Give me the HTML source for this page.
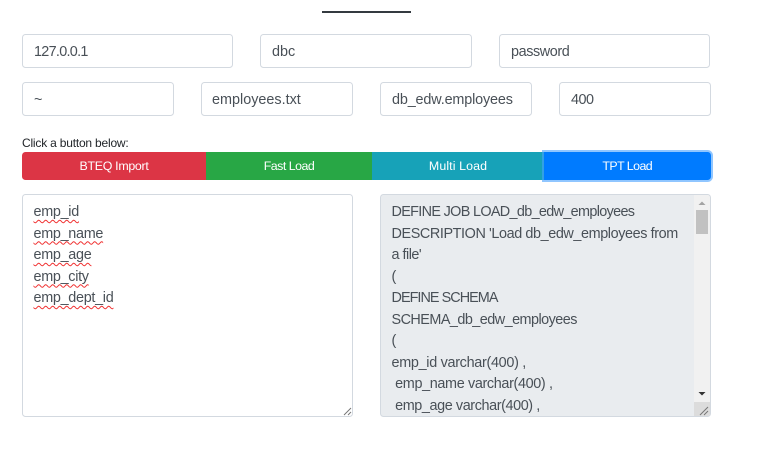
<!DOCTYPE html>
<html><head><meta charset="utf-8"><style>
html,body{margin:0;padding:0;background:#fff;width:768px;height:455px;overflow:hidden}
body{font-family:"Liberation Sans",sans-serif;color:#495057;position:relative}
.a{position:absolute;box-sizing:border-box}
.i{height:34px;border:1px solid #d3d9e0;border-radius:3.5px;background:#fff;font-size:14.4px;line-height:34px;padding-left:11px;white-space:nowrap}
.b{top:152px;height:28px;color:#fff;font-size:12.4px;line-height:29px;text-align:center;white-space:nowrap}
.t{top:194px;height:223px;border:1px solid #d3d9e0;border-radius:3.5px;overflow:hidden}
.l{position:absolute;left:10.5px;font-size:14.4px;line-height:21.5px;white-space:pre;color:#495057}
.w{text-decoration:underline wavy #f03030 1px;text-underline-offset:3px;text-decoration-skip-ink:none}
</style></head><body>
<div class="a" style="left:322px;top:11px;width:89px;height:2px;background:#343a40"></div>
<div class="a i" style="left:22px;top:34px;width:211px;letter-spacing:-.7px">127.0.0.1</div>
<div class="a i" style="left:260px;top:34px;width:212px">dbc</div>
<div class="a i" style="left:499px;top:34px;width:211px;letter-spacing:-.4px">password</div>
<div class="a i" style="left:22px;top:82px;width:152px">~</div>
<div class="a i" style="left:201px;top:82px;width:152px;padding-left:10px">employees.txt</div>
<div class="a i" style="left:380px;top:82px;width:152px;letter-spacing:-.15px">db_edw.employees</div>
<div class="a i" style="left:559px;top:82px;width:152px;letter-spacing:-.5px">400</div>
<div class="a" style="left:22px;top:135px;font-size:12px;line-height:16px;color:#212529;white-space:nowrap;letter-spacing:-.2px">Click a button below:</div>
<div class="a b" style="left:22px;width:184px;background:#dc3545;border-radius:3.5px 0 0 3.5px;letter-spacing:-.3px">BTEQ Import</div>
<div class="a b" style="left:206px;width:166px;background:#28a745;letter-spacing:-.5px">Fast Load</div>
<div class="a b" style="left:372px;width:172px;background:#17a2b8;letter-spacing:.1px">Multi Load</div>
<div class="a b" style="left:543.5px;width:167.5px;background:#007bff;border-radius:0 3.5px 3.5px 0;box-shadow:0 0 0 2px rgba(70,160,255,.6);letter-spacing:-.55px">TPT Load</div>
<div class="a t" style="left:22px;width:331px;background:#fff">
<div class="l" style="top:7px;letter-spacing:-.3px"><span class="w">emp_id</span>
<span class="w">emp_name</span>
<span class="w">emp_age</span>
<span class="w">emp_city</span>
<span class="w">emp_dept_id</span></div>
<svg class="a" style="right:0;bottom:0" width="10" height="10" viewBox="0 0 10 10"><path d="M2 9L9 2M6 9L9 6" stroke="#777" stroke-width="1" fill="none"/></svg>
</div>
<div class="a t" style="left:380px;width:331px;background:#e9ecef">
<div class="l" style="top:7px"><span style="letter-spacing:-.66px">DEFINE JOB LOAD_db_edw_employees</span>
<span style="letter-spacing:-.4px">DESCRIPTION 'Load db_edw_employees from</span>
<span style="letter-spacing:-.5px">a file'</span>
(
<span style="letter-spacing:-.95px">DEFINE SCHEMA</span>
<span style="letter-spacing:-.53px">SCHEMA_db_edw_employees</span>
(
<span style="letter-spacing:-.3px">emp_id varchar(400) ,</span>
<span style="letter-spacing:-.35px"> emp_name varchar(400) ,</span>
<span style="letter-spacing:-.4px"> emp_age varchar(400) ,</span></div>
<div class="a" style="right:0;top:0;width:16px;height:222px;background:#f1f1f1"></div>
<div class="a" style="right:2px;top:15px;width:12px;height:24px;background:#c1c1c1"></div>
<svg class="a" style="right:0;top:0" width="16" height="222" viewBox="0 0 16 222"><path d="M4.5 10L8 6.5L11.5 10Z" fill="#a3a3a3"/><path d="M4.5 197L11.5 197L8 200.5Z" fill="#333"/><rect x="0" y="207" width="16" height="15" fill="#dcdcdc"/><path d="M6 220L14 212M10 220L14 216" stroke="#777" stroke-width="1" fill="none"/></svg>
</div>
</body></html>
